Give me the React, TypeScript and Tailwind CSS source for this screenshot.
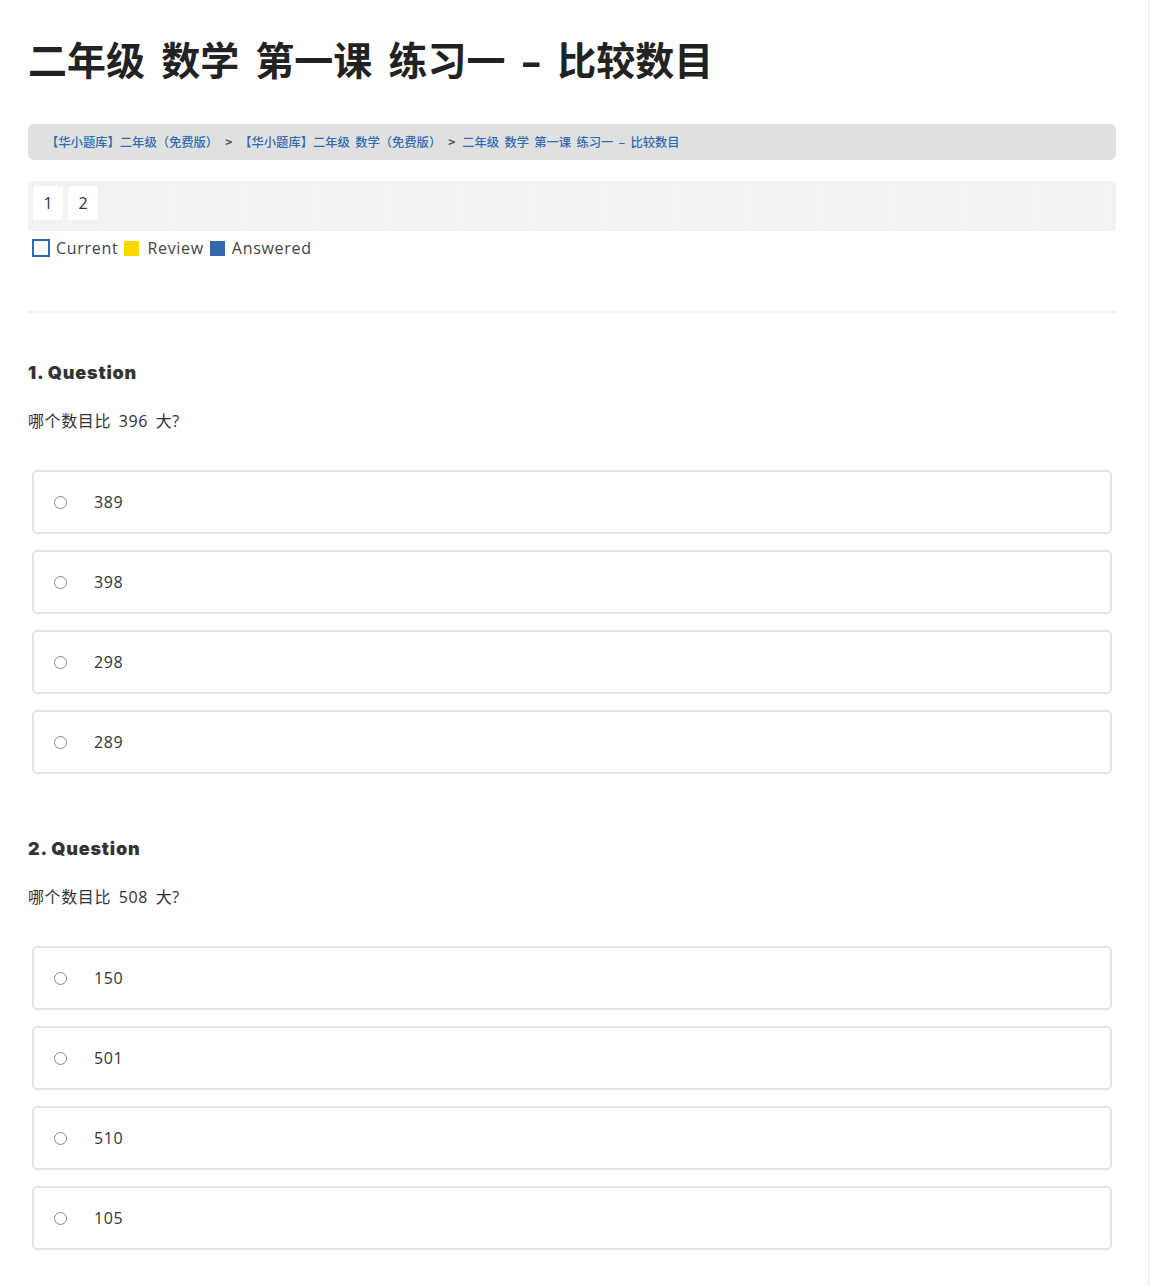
const QUESTIONS = [
  { n: 1, text: '哪个数目比 396 大?', options: ['389', '398', '298', '289'] },
  { n: 2, text: '哪个数目比 508 大?', options: ['150', '501', '510', '105'] },
]

const CRUMBS = ['【华小题库】二年级（免费版）', '【华小题库】二年级 数学（免费版）', '二年级 数学 第一课 练习一 – 比较数目']

function Option({ label }: { label: string }) {
  return (
    <label className="flex items-center h-[64px] mx-[4px] border-2 border-[#e3e5ea] rounded-[5px] bg-white">
      <span className="ml-[20px] w-[13px] h-[13px] rounded-full border border-[#8a8a8a] bg-white" />
      <span className="ml-[27px] text-[16px] tracking-[0.6px] text-[#333]">{label}</span>
    </label>
  )
}

export default function App() {
  return (
    <div className="min-h-[1286px] mr-[1px] border-r border-[#ececec] bg-white pl-[28px] pr-[32px] pt-[37px] pb-[30px]" style={{ fontFamily: '"Open Sans", "Noto Sans CJK SC", sans-serif' }}>
      <h1 className="text-[39px] leading-[46px] font-bold text-[#222] [word-spacing:6px]" style={{ fontFamily: '"Open Sans", "Noto Sans CJK SC", sans-serif' }}>
        二年级 数学 第一课 练习一 – 比较数目
      </h1>

      <nav className="mt-[41px] h-[36px] rounded-[6px] bg-[#e0e0e0] flex items-center pl-[18px] text-[12.3px] font-medium [word-spacing:2.5px]" style={{ fontFamily: '"Noto Sans CJK SC", sans-serif' }}>
        {CRUMBS.map((c, i) => (
          <span key={i} className="flex items-center">
            {i > 0 && <span className="mx-[7px] text-[#444]">&gt;</span>}
            <span className="text-[#2f6bb3]">{c}</span>
          </span>
        ))}
      </nav>

      <div className="mt-[21px] h-[50px] rounded-[3px] bg-[#f2f3f5] bg-[radial-gradient(#dddee2_0.8px,transparent_1px)] bg-[length:9px_9px] flex gap-[5px] pt-[5px] pl-[5px]">
        {[1, 2].map(p => (
          <div key={p} className="w-[30px] h-[34px] rounded-[3px] bg-white flex items-center justify-center text-[16px] text-[#333]">{p}</div>
        ))}
      </div>

      <div className="mt-[5px] flex items-center text-[16px] tracking-[0.7px] text-[#444] ml-[4px]">
        <span className="w-[18px] h-[18px] border-2 border-[#2e6ab1] mr-[6px]" />
        <span>Current</span>
        <span className="w-[15px] h-[15px] bg-[#ffd700] ml-[6px] mr-[8px]" />
        <span>Review</span>
        <span className="w-[15px] h-[15px] bg-[#3467ab] ml-[6px] mr-[7px]" />
        <span>Answered</span>
      </div>

      <hr className="mt-[51px] border-0 h-[2px] bg-[#f0f0f0]" />

      {QUESTIONS.map((q, qi) => (
        <section key={q.n} className={qi === 0 ? 'mt-[48px]' : 'mt-[63px]'}>
          <h3 className="text-[18px] leading-[24px] font-black tracking-[0.8px] text-[#333]" style={{ fontFamily: 'Inter, sans-serif' }}>{q.n}. Question</h3>
          <p className="mt-[24px] text-[16px] leading-[24px] tracking-[0.6px] [word-spacing:3px] text-[#333]">{q.text}</p>
          <div className="mt-[37px] flex flex-col gap-[16px]">
            {q.options.map(o => <Option key={o} label={o} />)}
          </div>
        </section>
      ))}
    </div>
  )
}
